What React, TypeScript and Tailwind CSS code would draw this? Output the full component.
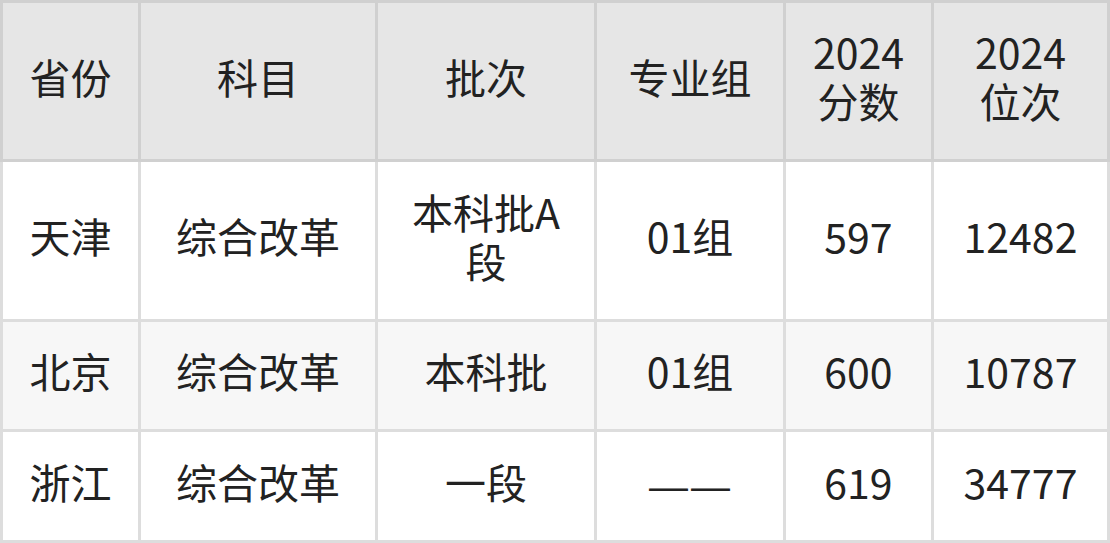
import React from "react";

const cols = ["w-[141px] border-l-[3px]", "w-[237px]", "w-[219px]", "w-[189px]", "w-[148px]", "w-[176px]"];

const header: React.ReactNode[] = [
  "省份",
  "科目",
  "批次",
  "专业组",
  <>2024<br />分数</>,
  <>2024<br />位次</>,
];

const dash = (
  <span
    className="text-[39px] tracking-[3px] relative left-[1px] top-[3px]"
    style={{ fontFamily: '"Liberation Sans", sans-serif' }}
  >
    ——
  </span>
);

const rows: { h: string; bg: string; cells: React.ReactNode[] }[] = [
  { h: "h-[160px]", bg: "bg-white", cells: ["天津", "综合改革", <>本科批A<br />段</>, "01组", "597", "12482"] },
  { h: "h-[110px]", bg: "bg-[#f7f7f7]", cells: ["北京", "综合改革", "本科批", "01组", "600", "10787"] },
  { h: "h-[111px]", bg: "bg-white", cells: ["浙江", "综合改革", "一段", dash, "619", "34777"] },
];

export default function App() {
  return (
    <div
      className="w-[1110px] h-[543px] bg-white text-[#222222] text-[41px] leading-[49px]"
      style={{ fontFamily: '"Noto Sans CJK SC", "Noto Sans", sans-serif' }}
    >
      <div className="flex h-[162px] bg-[#e6e6e6]">
        {header.map((c, i) => (
          <div
            key={i}
            className={`${cols[i]} border-t-[3px] border-r-[3px] border-b-[3px] border-[#d0d0d0] flex items-center justify-center text-center shrink-0 pb-[10px]`}
          >
            <div>{c}</div>
          </div>
        ))}
      </div>
      {rows.map((r, ri) => (
        <div key={ri} className={`flex ${r.h} ${r.bg}`}>
          {r.cells.map((c, i) => (
            <div
              key={i}
              className={`${cols[i]} border-r-[3px] border-b-[3px] border-[#dddddd] flex items-center justify-center text-center shrink-0 pb-[10px]`}
            >
              <div>{c}</div>
            </div>
          ))}
        </div>
      ))}
    </div>
  );
}
